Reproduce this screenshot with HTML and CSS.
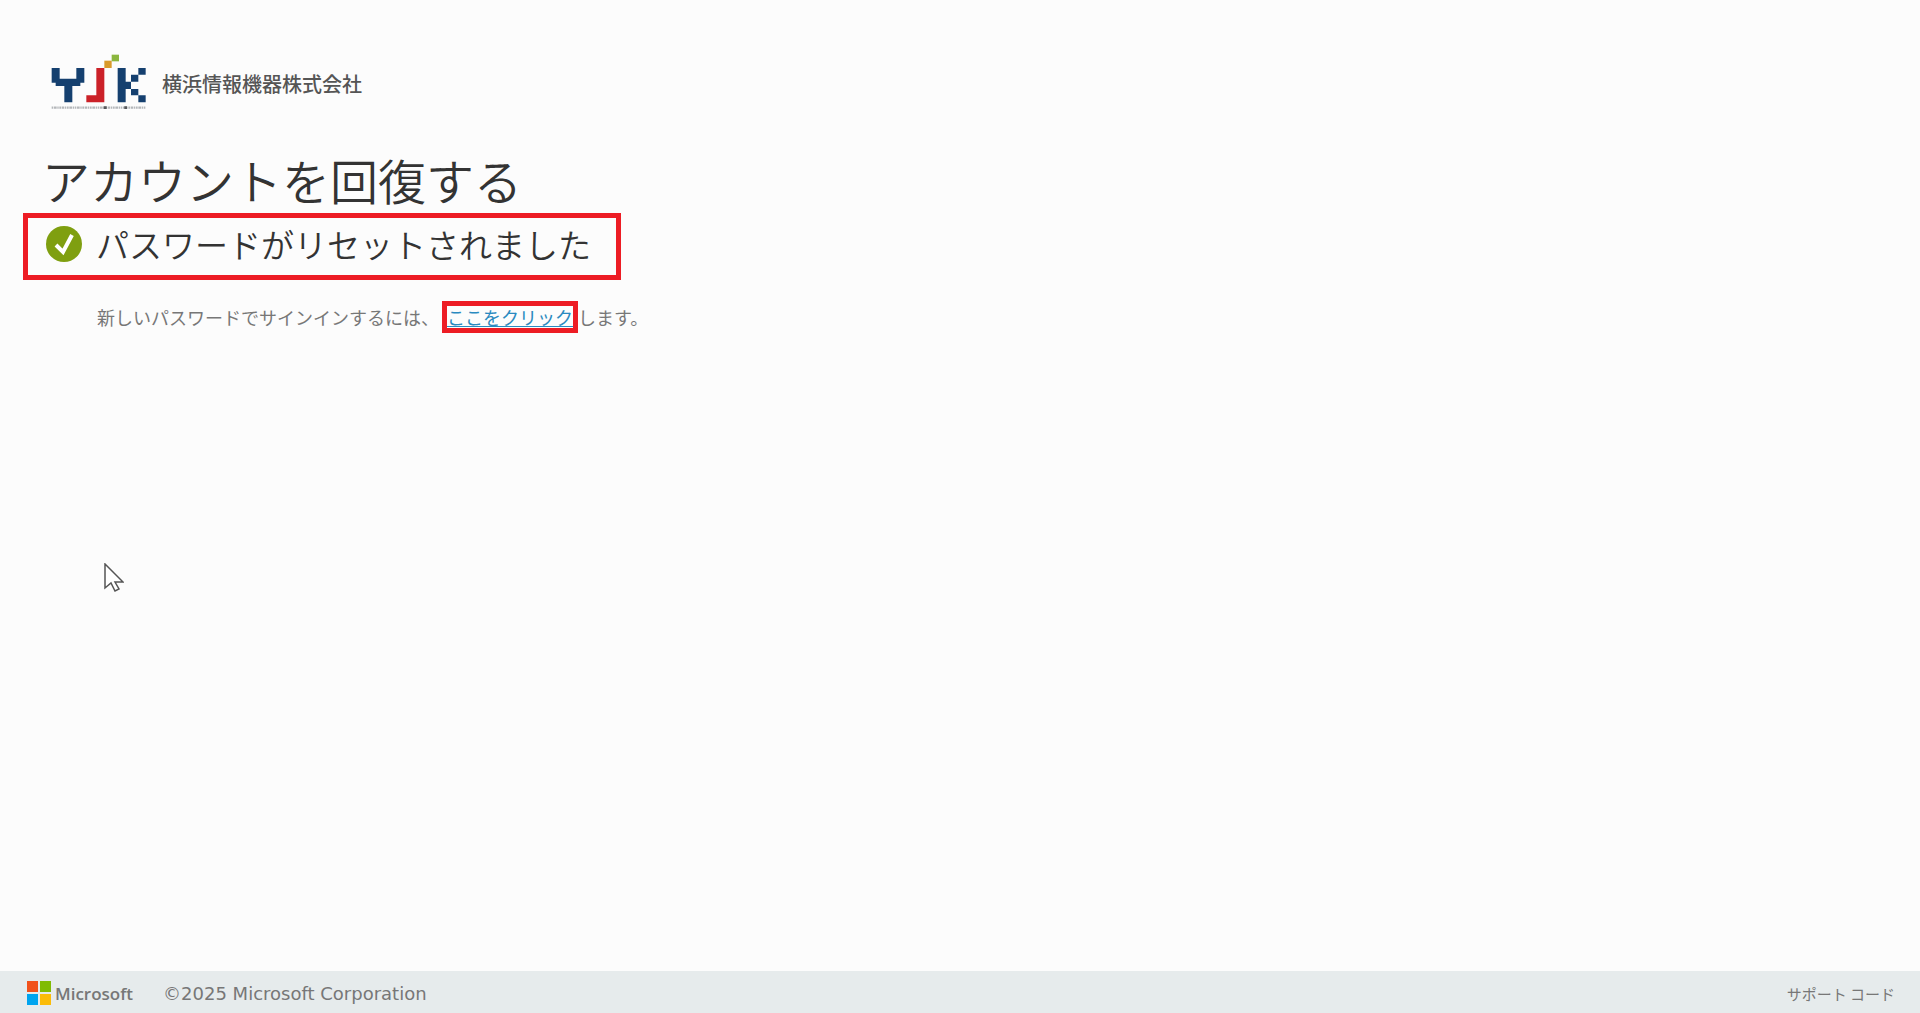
FILE: index.html
```html
<!DOCTYPE html>
<html lang="ja">
<head>
<meta charset="UTF-8">
<meta name="viewport" content="width=device-width, initial-scale=1.0">
<title>アカウントを回復する</title>
<link rel="stylesheet" href="styles.css">
</head>
<body>
<header class="brand">
    <svg class="brand-logo" viewBox="0 0 288 174" role="img" aria-label="YJK">
        <path fill="#15406f" d="M2 42h24v32h50V42h24v44H88v10H64v49H40V96H14V86H2z"/>
        <path fill="#cb2128" d="M136 42h24v103h-54v-21h30z"/>
        <path fill="#d99a2b" d="M160 20h22v22h-22z"/>
        <path fill="#8bb63e" d="M182 2h22v20h-22z"/>
        <path fill="#15406f" d="M200 42h24v41h16v22h-16v40h-24zM240 62h22v21h-22zM262 42h22v20h-22zM240 105h22v19h-22zM262 124h22v21h-22z"/>
        <path stroke="#b4b7ba" stroke-width="7" stroke-dasharray="5 2 8 2 4 2" d="M2 161h282"/>
        <path stroke="#55585b" stroke-width="8" d="M158 161h9M220 161h8"/>
    </svg>
    <span class="brand-name">横浜情報機器株式会社</span>
</header>
<main class="content">
    <h1>アカウントを回復する</h1>
    <div class="result">
        <svg class="result-icon" viewBox="0 0 36 36" aria-hidden="true">
            <circle cx="18" cy="18" r="18" fill="#7f9f10"/>
            <path d="M10 19l7 7 9-17" fill="none" stroke="#fff" stroke-width="4"/>
        </svg>
        <h2>パスワードがリセットされました</h2>
    </div>
    <p class="message">新しいパスワードでサインインするには、<a class="signin-link" href="#">ここをクリック</a>します。</p>
</main>
<footer class="footer">
    <svg class="ms-logo" viewBox="0 0 24 24" aria-hidden="true">
        <path fill="#f1511b" d="M0 0h11v11H0z"/>
        <path fill="#80bb03" d="M13 0h11v11H13z"/>
        <path fill="#00a4ef" d="M0 13h11v11H0z"/>
        <path fill="#fbbc09" d="M13 13h11v11H13z"/>
    </svg>
    <span class="ms-name">Microsoft</span>
    <span class="copyright">©2025 Microsoft Corporation</span>
    <a class="support" href="#">サポート コード</a>
</footer>
<!-- mouse pointer -->
<svg class="pointer" viewBox="0 0 20 30" aria-hidden="true">
    <path d="M1 1v24l6-5 4 8 4-2-4-7h8z" fill="#fff" stroke="#555" stroke-width="1.5"/>
</svg>
</body>
</html>
```
FILE: styles.css
```css
* {
    box-sizing: border-box;
}
body {
    display: flex;
    flex-direction: column;
    min-height: 100vh;
    margin: 0;
    background-color: #fcfcfc;
    color: #333;
    font-family: "DejaVu Sans", "Noto Sans CJK JP", sans-serif;
}
.brand {
    display: flex;
    align-items: center;
    gap: 15px;
    padding: 54px 51px 0;
}
.brand-logo {
    width: 96px;
    height: 58px;
}
.brand-name {
    padding-top: 2px;
    font-family: "Noto Sans CJK JP", sans-serif;
    font-size: 20px;
    line-height: 30px;
    font-weight: 500;
    color: #555;
}
.content {
    flex: 1;
    padding: 34px 23px;
}
h1, h2 {
    margin: 0;
    font-family: "Noto Sans CJK JP", sans-serif;
    font-weight: 350;
}
h1 {
    padding-left: 19px;
    font-size: 48px;
    line-height: 67px;
}
.result {
    display: flex;
    align-items: center;
    gap: 14px;
    width: fit-content;
    height: 67px;
    padding: 0 25px 6px 18px;
    border: 5px solid #ed1c24;
}
.result-icon {
    width: 36px;
    height: 36px;
}
h2 {
    font-size: 33px;
    line-height: 48px;
}
.message {
    margin: 21px 0 0 74px;
    font-family: "Noto Sans CJK JP", sans-serif;
    font-size: 18px;
    line-height: 32px;
    color: #777;
}
.signin-link {
    display: inline-block;
    margin-left: 3px;
    border: 5px solid #ed1c24;
    line-height: 22px;
    color: #2a8ac0;
}
.footer {
    display: flex;
    align-items: center;
    height: 42px;
    padding: 2px 25px 0 27px;
    background-color: #e6ebec;
    color: #777;
}
.ms-logo {
    width: 24px;
    height: 24px;
}
.ms-name {
    margin: 0 30px 0 4px;
    font-family: "Open Sans", sans-serif;
    font-size: 17px;
    font-weight: 600;
}
.copyright {
    font-size: 18px;
}
.support {
    margin-left: auto;
    font-family: "Noto Sans CJK JP", sans-serif;
    font-size: 15px;
    color: #777;
    text-decoration: none;
}
.pointer {
    position: absolute;
    top: 563px;
    left: 104px;
    width: 20px;
    height: 30px;
}
```
